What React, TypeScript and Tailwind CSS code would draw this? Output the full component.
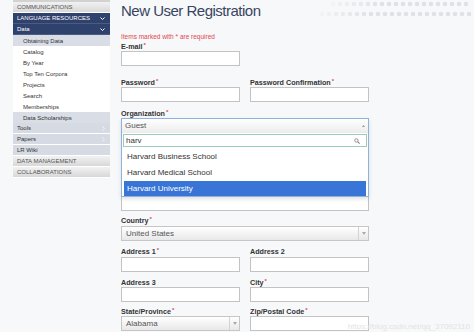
import React from 'react'

type Row = {
  label: string
  kind: 'cap' | 'navy' | 'sub' | 'subOn' | 'tool'
  arrow?: 'down' | 'right'
}

const MENU: Row[] = [
  { label: 'COMMUNICATIONS', kind: 'cap' },
  { label: 'LANGUAGE RESOURCES', kind: 'navy', arrow: 'down' },
  { label: 'Data', kind: 'navy', arrow: 'down' },
  { label: 'Obtaining Data', kind: 'subOn' },
  { label: 'Catalog', kind: 'sub' },
  { label: 'By Year', kind: 'sub' },
  { label: 'Top Ten Corpora', kind: 'sub' },
  { label: 'Projects', kind: 'sub' },
  { label: 'Search', kind: 'sub' },
  { label: 'Memberships', kind: 'sub' },
  { label: 'Data Scholarships', kind: 'subOn' },
  { label: 'Tools', kind: 'tool', arrow: 'right' },
  { label: 'Papers', kind: 'tool', arrow: 'right' },
  { label: 'LR Wiki', kind: 'tool' },
  { label: 'DATA MANAGEMENT', kind: 'cap' },
  { label: 'COLLABORATIONS', kind: 'cap' },
]

const rowStyle: Record<Row['kind'], string> = {
  cap: 'bg-linear-to-b from-[#f2f2f2] to-[#d8d8d8] text-[#555] pl-[4px] border-b border-white',
  navy: 'bg-[#2f416d] text-white pl-[4px] border-b border-[#4b5b82]',
  sub: 'bg-white text-[#333] pl-[10px]',
  subOn: 'bg-[#d9dee6] text-[#333] pl-[10px]',
  tool: 'bg-[#d5dae3] text-[#333] pl-[4px] border-b border-white',
}

function Sidebar() {
  return (
    <nav className="ml-[13px] w-[97px] shrink-0">
      <div className="h-[2px] bg-[#d2d2d2]" />
      {MENU.map(row => (
        <div key={row.label} className={`flex h-[11px] items-center justify-between pr-[5px] text-[6px] leading-none whitespace-nowrap ${rowStyle[row.kind]}`}>
          <span>{row.label}</span>
          {row.arrow === 'down' && (
            <svg width="5" height="3" viewBox="0 0 5 3">
              <path d="M0.5 0.5 L2.5 2.5 L4.5 0.5" stroke="#fff" strokeWidth="1" fill="none" />
            </svg>
          )}
          {row.arrow === 'right' && (
            <svg width="3" height="5" viewBox="0 0 3 5">
              <path d="M0.5 0.5 L2.5 2.5 L0.5 4.5" stroke="#eef1f5" strokeWidth="1" fill="none" />
            </svg>
          )}
        </div>
      ))}
    </nav>
  )
}

function Label({ children, req }: { children: React.ReactNode; req?: boolean }) {
  return (
    <div className="h-[9px] text-[7.2px] leading-[9px] font-bold text-[#333] whitespace-nowrap">
      {children}
      {req && <span className="ml-[1px] align-top text-[6px] leading-[6px] text-[#e0474c]">*</span>}
    </div>
  )
}

function Input({ className = '' }: { className?: string }) {
  return <input readOnly className={`block h-[15px] w-full border border-[#c3c3c3] bg-white ${className}`} />
}

function Select({ value }: { value: string }) {
  return (
    <div className="flex h-[15px] items-center border border-[#c6c6c6] bg-linear-to-b from-white to-[#e8e8e8]">
      <span className="flex-1 pl-[4px] text-[8px] leading-none text-[#555]">{value}</span>
      <span className="flex h-full w-[10px] items-center justify-center border-l border-[#d3d3d3]">
        <svg width="4" height="3" viewBox="0 0 4 3">
          <path d="M0 0 L4 0 L2 3 Z" fill="#aaa" />
        </svg>
      </span>
    </div>
  )
}

function Dots() {
  const rowA = Array.from({ length: 20 }, (_, i) => 15 + i * 7)
  const rowB = Array.from({ length: 22 }, (_, i) => 4 + i * 7)
  return (
    <svg className="absolute right-0 top-0" width="156" height="20" viewBox="0 0 156 20">
      {rowA.map((x, i) => (
        <circle key={'a' + i} cx={x} cy={4} r={2.3} fill="#dfe1e8" opacity={Math.min(1, 0.2 + i * 0.12)} />
      ))}
      {rowB.map((x, i) => (
        <circle key={'b' + i} cx={x} cy={14} r={2.3} fill="#dfe1e8" opacity={Math.min(1, 0.2 + i * 0.12)} />
      ))}
    </svg>
  )
}

function OrgDropdown() {
  const options = ['Harvard Business School', 'Harvard Medical School', 'Harvard University']
  return (
    <div className="absolute left-0 top-0 z-10 w-full border border-[#8fb2dd] bg-white shadow-[0_2px_4px_rgba(0,0,0,0.12)]">
      <div className="flex h-[14px] items-center justify-between bg-linear-to-b from-white to-[#ececec] pl-[3px] pr-[3px]">
        <span className="text-[8px] leading-none text-[#555]">Guest</span>
        <svg width="3" height="2" viewBox="0 0 3 2">
          <path d="M0 2 L3 2 L1.5 0 Z" fill="#999" />
        </svg>
      </div>
      <div className="px-[1px] pt-[1px]">
        <div className="flex h-[13px] items-center justify-between border border-[#9ccbbf] bg-white pl-[2px] pr-[6px]">
          <span className="text-[8px] leading-none text-[#333]">harv</span>
          <svg width="6" height="6" viewBox="0 0 6 6">
            <circle cx="2.4" cy="2.4" r="1.7" stroke="#888" strokeWidth="0.9" fill="none" />
            <path d="M3.6 3.6 L5.6 5.6" stroke="#888" strokeWidth="1.1" />
          </svg>
        </div>
      </div>
      <ul className="px-[2px] pt-[1px]">
        {options.map((o, i) => (
          <li
            key={o}
            className={`mt-[1px] flex h-[15px] items-center pl-[3px] text-[8px] leading-none ${i === 2 ? 'bg-[#3875d7] text-white' : 'text-[#333]'}`}
          >
            {o}
          </li>
        ))}
      </ul>
    </div>
  )
}

export default function App() {
  return (
    <div className="relative flex h-[332px] w-[474px] overflow-hidden bg-[#f7f8fa] font-['Liberation_Sans',Arial,sans-serif]">
      <Dots />
      <Sidebar />

      <main className="ml-[11px] flex w-[248px] flex-col">
        <h1 className="mt-[3px] h-[15px] text-[15px] leading-[15px] tracking-[-0.5px] whitespace-nowrap text-[#38455f]">
          New User Registration
        </h1>
        <p className="mt-[15px] h-[8px] text-[6.5px] leading-[8px] text-[#e0474c]">Items marked with * are required</p>

        <div className="mt-[1px] w-[119px]">
          <Label req>E-mail</Label>
          <Input />
        </div>

        <div className="mt-[12px] grid grid-cols-2 gap-x-[10px]">
          <div>
            <Label req>Password</Label>
            <Input />
          </div>
          <div>
            <Label req>Password Confirmation</Label>
            <Input />
          </div>
        </div>

        <div className="mt-[7px]">
          <Label req>Organization</Label>
          <div className="relative">
            <Select value="Guest" />
            <OrgDropdown />
          </div>
        </div>

        <Input className="mt-[63px]" />

        <div className="mt-[5px]">
          <Label req>Country</Label>
          <div className="mt-[1px]">
            <Select value="United States" />
          </div>
        </div>

        <div className="mt-[6px] grid grid-cols-2 gap-x-[10px]">
          <div>
            <Label req>Address 1</Label>
            <Input className="mt-[1px]" />
          </div>
          <div>
            <Label>Address 2</Label>
            <Input className="mt-[1px]" />
          </div>
        </div>

        <div className="mt-[6px] grid grid-cols-2 gap-x-[10px]">
          <div>
            <Label>Address 3</Label>
            <Input />
          </div>
          <div>
            <Label req>City</Label>
            <Input />
          </div>
        </div>

        <div className="mt-[5px] grid grid-cols-2 gap-x-[10px]">
          <div>
            <Label req>State/Province</Label>
            <Select value="Alabama" />
          </div>
          <div>
            <Label req>Zip/Postal Code</Label>
            <Input />
          </div>
        </div>
      </main>

      <span className="absolute bottom-0 right-[4px] text-[8px] leading-[10px] text-[#e3e3e6]">
        https://blog.csdn.net/qq_37092110
      </span>
    </div>
  )
}
